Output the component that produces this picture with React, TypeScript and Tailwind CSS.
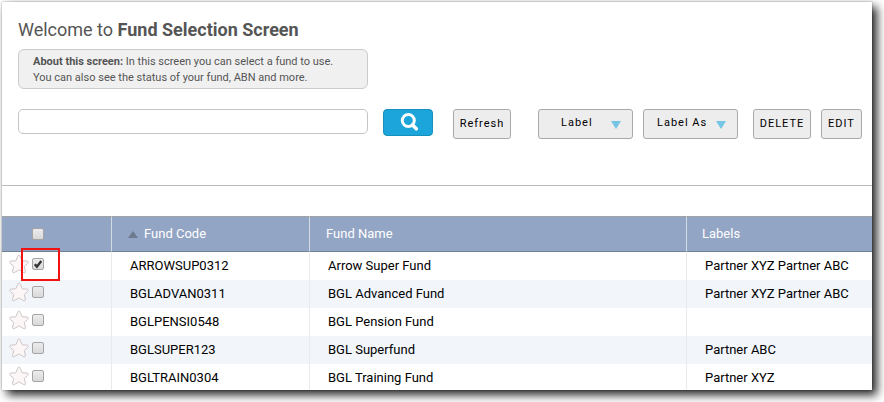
import { useState } from "react";

type Fund = { code: string; name: string; labels: string };

const funds: Fund[] = [
  { code: "ARROWSUP0312", name: "Arrow Super Fund", labels: "Partner XYZ Partner ABC" },
  { code: "BGLADVAN0311", name: "BGL Advanced Fund", labels: "Partner XYZ Partner ABC" },
  { code: "BGLPENSI0548", name: "BGL Pension Fund", labels: "" },
  { code: "BGLSUPER123", name: "BGL Superfund", labels: "Partner ABC" },
  { code: "BGLTRAIN0304", name: "BGL Training Fund", labels: "Partner XYZ" },
];

const toolButton =
  "h-[30px] shrink-0 rounded-[3px] border border-[#a9a9a9] bg-[#ededed] text-[11px] leading-4 tracking-[1px] text-black";

function Checkbox({
  label,
  checked,
  onChange,
}: {
  label: string;
  checked: boolean;
  onChange: () => void;
}) {
  return (
    <span className="relative block size-3 shrink-0">
      <input
        type="checkbox"
        aria-label={label}
        checked={checked}
        onChange={onChange}
        className="block size-3 appearance-none rounded-xs border border-[#a5a5a5] bg-linear-to-b from-[#ececec] to-[#d9d9d9]"
      />
      {checked && (
        <svg viewBox="0 0 12 12" className="pointer-events-none absolute inset-0 size-3" fill="none">
          <path d="M2.8 6.2 4.9 8.6 9.3 3" stroke="#333" strokeWidth="2.3" />
        </svg>
      )}
    </span>
  );
}

function Star() {
  return (
    <svg viewBox="0 0 20 20" className="size-5" fill="#fcf6f6" stroke="#cbc6c6" strokeLinejoin="round">
      <path d="M10 1c.6 0 .9.500 1.200 1.200l1.700 4.100c.1.300.4.500.7.500l4.300.300c1.500.1 1.900 1.300.8 2.300l-3 2.700c-.3.300-.4.500-.3.900l1 4.200c.3 1.500-.6 2.100-1.900 1.300l-4-2.400c-.3-.2-.7-.2-1 0l-4 2.400c-1.300.8-2.200.2-1.900-1.300l1-4.200c.1-.4 0-.6-.3-.9l-3-2.700C.2 8.400.6 7.200 2.100 7.100l4.300-.3c.3 0 .6-.2.7-.5l1.700-4.100C9.100 1.500 9.400 1 10 1z" />
    </svg>
  );
}

function Dropdown({ label, inset }: { label: string; inset: string }) {
  return (
    <span className="relative block w-[95px] shrink-0">
      <select aria-label={label} className={`${toolButton} block w-full appearance-none pb-0.5 ${inset}`}>
        <option>{label}</option>
      </select>
      <svg viewBox="0 0 10 8" className="pointer-events-none absolute top-3 right-3 h-2 w-2.5" fill="#74c5e6">
        <path d="M0 0h10L5 8z" />
      </svg>
    </span>
  );
}

export default function App() {
  const [selected, setSelected] = useState<string[]>(["ARROWSUP0312"]);
  const allSelected = selected.length === funds.length;

  const toggle = (code: string) =>
    setSelected((s) => (s.includes(code) ? s.filter((c) => c !== code) : [...s, code]));

  return (
    <div className="overflow-hidden bg-white pt-0.5 pr-3 pb-3 pl-0.5 font-[Roboto,sans-serif]">
      <main className="bg-white shadow-[0_0_2px_rgba(0,0,0,0.35),5px_5px_9px_rgba(0,0,0,0.85)]">
        <header className="px-4 pt-4">
          <h1 className="text-lg leading-6 text-[#555]">
            Welcome to <strong className="font-bold">Fund Selection Screen</strong>
          </h1>
          <p className="mt-[7px] h-10 w-[350px] rounded-md border border-[#cbcbcb] bg-[#f0f0f0] px-3.5 py-1 text-[11px] leading-4 whitespace-nowrap text-[#555]">
            <strong>About this screen:</strong> In this screen you can select a fund to use.
            <br />
            You can also see the status of your fund, ABN and more.
          </p>
        </header>

        <form
          className="flex items-start border-b border-[#bbb] pt-5 pr-2 pb-[46px] pl-4"
          onSubmit={(e) => e.preventDefault()}
        >
          <input
            type="text"
            aria-label="Search funds"
            className="h-[25px] w-[350px] rounded-[5px] border border-[#c4c4c4] bg-white px-2 text-[13px]"
          />
          <button
            type="submit"
            aria-label="Search"
            className="ml-[15px] flex h-[27px] w-[50px] shrink-0 justify-center rounded-sm border border-[#158fbb] bg-[#1ba5da] pt-0.5 pl-0.5"
          >
            <svg viewBox="0 0 20 20" className="size-5" fill="none" stroke="#fff">
              <circle cx="9.300" cy="8.500" r="6" strokeWidth="3" />
              <path d="M13.500 13l3.800 3.800" strokeWidth="3.600" strokeLinecap="round" />
            </svg>
          </button>
          <button type="button" className={`${toolButton} ml-5 w-[58px]`}>
            Refresh
          </button>
          <div className="ml-[27px] flex gap-2.5">
            <Dropdown label="Label" inset="pl-[22px]" />
            <Dropdown label="Label As" inset="pl-[13px]" />
          </div>
          <div className="ml-[15px] flex gap-2.5">
            <button type="button" className={`${toolButton} w-[58px]`}>
              DELETE
            </button>
            <button type="button" className={`${toolButton} w-[41px]`}>
              EDIT
            </button>
          </div>
        </form>

        <table className="mt-[30px] w-full table-fixed border-separate border-spacing-0 text-left text-[13px] leading-5">
          <colgroup>
            <col className="w-[109px]" />
            <col className="w-[198px]" />
            <col className="w-[377px]" />
            <col />
          </colgroup>
          <thead>
            <tr className="h-9 bg-[#93a5c4] text-white">
              <th className="border-y border-t-[#a3a3a3] border-b-[#737f93] p-0 font-normal">
                <div className="flex pl-[30px]">
                  <Checkbox
                    label="Select all funds"
                    checked={allSelected}
                    onChange={() => setSelected(allSelected ? [] : funds.map((f) => f.code))}
                  />
                </div>
              </th>
              <th className="border-y border-l border-t-[#a3a3a3] border-b-[#737f93] border-l-[#d5dbe5] p-0 font-normal">
                <div className="flex items-center gap-1.5 pl-4">
                  <svg viewBox="0 0 10 7" className="h-[7px] w-2.5" fill="#6c7a8e">
                    <path d="M5 0l5 7H0z" />
                  </svg>
                  Fund Code
                </div>
              </th>
              <th className="border-y border-l border-t-[#a3a3a3] border-b-[#737f93] border-l-[#d5dbe5] p-0 font-normal">
                <div className="pl-4">Fund Name</div>
              </th>
              <th className="border-y border-l border-t-[#a3a3a3] border-b-[#737f93] border-l-[#d5dbe5] p-0 font-normal">
                <div className="pl-[15px]">Labels</div>
              </th>
            </tr>
          </thead>
          <tbody className="text-black">
            {funds.map((fund, i) => (
              <tr key={fund.code} className="h-7 align-top last:h-[26px] even:bg-[#f2f6fb]">
                <td>
                  <div className="relative flex gap-[3px] pt-0.5 pl-[7px]">
                    <Star />
                    <div className="pt-1">
                      <Checkbox
                        label={`Select ${fund.name}`}
                        checked={selected.includes(fund.code)}
                        onChange={() => toggle(fund.code)}
                      />
                    </div>
                    {i === 0 && (
                      <span className="pointer-events-none absolute -top-1 left-[19px] h-[33px] w-[39px] border-2 border-[#f31212]" />
                    )}
                  </div>
                </td>
                <td className="border-l border-[#e8eaee] pt-1 pl-[18px]">{fund.code}</td>
                <td className="border-l border-[#e8eaee] pt-1 pl-[18px]">{fund.name}</td>
                <td className="border-l border-[#e8eaee] pt-1 pl-[18px]">{fund.labels}</td>
              </tr>
            ))}
          </tbody>
        </table>
      </main>
    </div>
  );
}
